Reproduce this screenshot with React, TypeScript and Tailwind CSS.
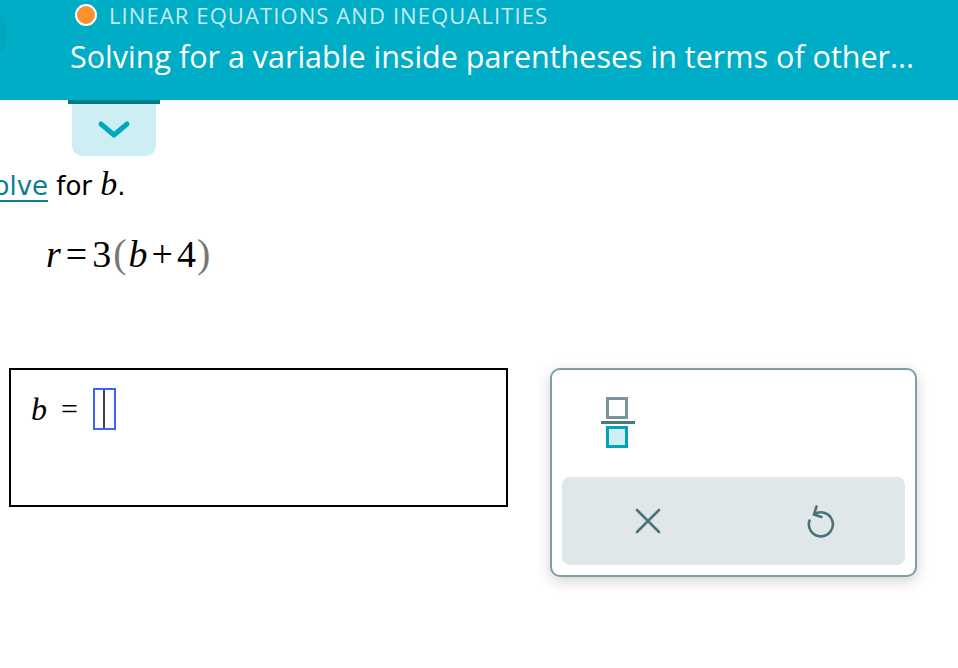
function FractionIcon() {
  return (
    <svg width="36" height="56" viewBox="0 0 36 56">
      <rect x="7.5" y="4.5" width="19" height="19" fill="none" stroke="#78949d" strokeWidth="3" />
      <rect x="1" y="27" width="34" height="3" fill="#4f7580" />
      <rect x="7.5" y="33.5" width="19" height="19" fill="#cdeef3" stroke="#00a3bb" strokeWidth="3" />
    </svg>
  );
}

function ClearIcon() {
  return (
    <svg width="28" height="28" viewBox="0 0 28 28" fill="none" stroke="#4a727d" strokeWidth="2.6" strokeLinecap="round">
      <path d="M3 3 L25 25" />
      <path d="M25 3 L3 25" />
    </svg>
  );
}

function UndoIcon() {
  return (
    <svg width="30" height="36" viewBox="0 0 30 36" fill="none" stroke="#4a727d" strokeWidth="2.6" strokeLinecap="round" strokeLinejoin="round">
      <path d="M9 11.5 A12 12 0 1 1 4.5 17.5" />
      <path d="M11.5 3.5 L9 11.5 L16.5 14" />
    </svg>
  );
}

export default function App() {
  return (
    <div className="w-[958px] h-[668px] bg-white overflow-hidden relative" style={{ fontFamily: '"Open Sans", "Noto Sans", sans-serif' }}>
      {/* Header */}
      <div className="h-[100px] bg-[#00adc6] relative">
        <div className="absolute left-[-16px] top-[14px] w-[22px] h-[40px] rounded-full bg-[#02a6be]" />
        <div className="flex items-center pl-[75px] pt-[2px] gap-[12px]">
          <span className="w-[22px] h-[22px] rounded-full bg-[#f7922e] border-2 border-white" />
          <span className="text-[22px] leading-[26px] text-[#c4ecf2] tracking-[1.1px]">
            LINEAR EQUATIONS AND INEQUALITIES
          </span>
        </div>
        <div className="pl-[70px] pt-[8px] text-[30.5px] leading-[40px] text-white font-medium">
          Solving for a variable inside parentheses in terms of other...
        </div>
      </div>

      {/* Collapse tab */}
      <div className="ml-[68px] w-[92px] h-[4px] bg-[#007d8d]" />
      <div className="ml-[72px] w-[84px] h-[52px] bg-[#cdeef3] rounded-b-[10px] flex items-center justify-center">
        <svg width="36" height="22" viewBox="0 0 36 22" fill="none" stroke="#00a8c1" strokeWidth="5" strokeLinecap="round" strokeLinejoin="round">
          <path d="M5 5 L18 16 L31 5" />
        </svg>
      </div>

      {/* Prompt */}
      <div className="mt-[10px] ml-[-23px] text-[26px] leading-[36px] text-black" style={{ fontFamily: '"DejaVu Sans", "Noto Sans", sans-serif' }}>
        <span className="text-[#0e7c95] underline underline-offset-[5px] decoration-[2px]">Solve</span>
        <span> for </span>
        <span className="italic text-[34px]" style={{ fontFamily: '"Liberation Serif", serif' }}>b</span>
        <span>.</span>
      </div>

      {/* Equation */}
      <div className="mt-[27px] ml-[46px] flex items-center text-[38px] leading-[46px] text-black" style={{ fontFamily: '"Liberation Serif", serif' }}>
        <span className="italic">r</span>
        <span className="mx-[5px]">=</span>
        <span>3</span>
        <span className="text-[#777] text-[40px] mx-[2px]">(</span>
        <span className="italic">b</span>
        <span className="mx-[4px]">+</span>
        <span>4</span>
        <span className="text-[#777] text-[40px] mx-[1px]">)</span>
      </div>

      {/* Answer area */}
      <div className="mt-[91px] ml-[9px] flex gap-[42px] items-start">
        <div className="w-[499px] h-[139px] border-2 border-black px-[20px] pt-[18px]">
          <div className="flex items-center text-[32px] leading-[42px]" style={{ fontFamily: '"Liberation Serif", serif' }}>
            <span className="italic">b</span>
            <span className="ml-[14px] text-[30px]">=</span>
            <span className="ml-[15px] relative w-[23px] h-[42px] border-2 border-[#3b63f5] flex justify-center">
              <span className="w-[2px] h-full bg-[#444]" />
            </span>
          </div>
        </div>

        <div className="w-[367px] h-[209px] rounded-[10px] border-2 border-[#7f9ea6] bg-white shadow-[0_4px_14px_rgba(0,0,0,0.18)] px-[10px] pt-[24px]">
          <div className="ml-[38px]">
            <FractionIcon />
          </div>
          <div className="mt-[27px] h-[88px] rounded-[8px] bg-[#e0e7e9] flex items-center">
            <div className="w-[172px] flex justify-center">
              <ClearIcon />
            </div>
            <div className="flex-1 flex justify-center">
              <UndoIcon />
            </div>
          </div>
        </div>
      </div>
    </div>
  );
}
